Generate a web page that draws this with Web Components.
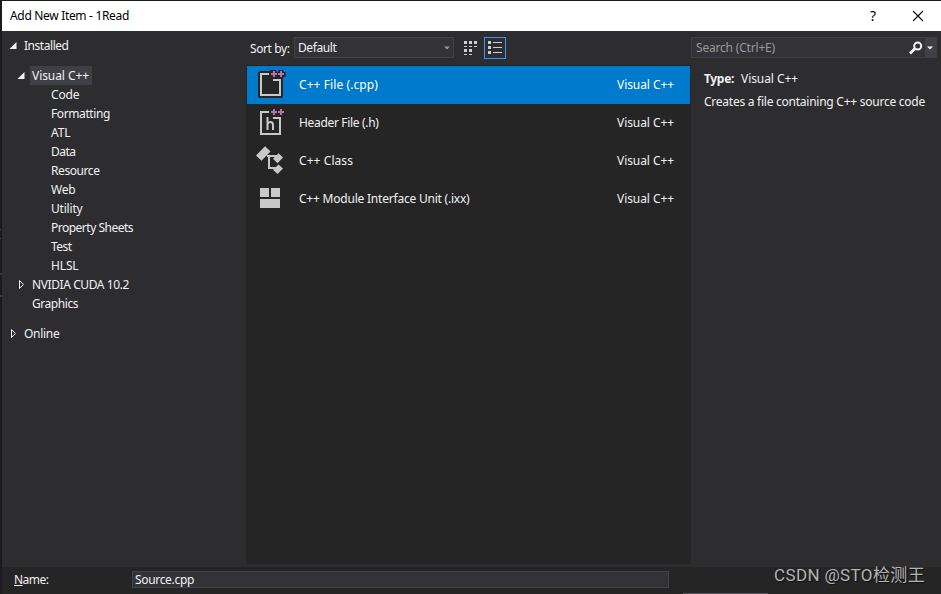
<!DOCTYPE html>
<html lang="en">
<head>
<meta charset="utf-8">
<title>Add New Item</title>
<style>
  html, body { margin: 0; height: 100%; overflow: hidden; }
  body {
    background: #1b1b1c;
    color: #f1f1f1;
    font: 12px/18px "Noto Sans", "Open Sans", "Noto Sans CJK SC", sans-serif;
  }
</style>
</head>
<body>
<item-dialog></item-dialog>

<script>
// Base class: puts the markup in an open shadow root
class UiElement extends HTMLElement {
  constructor () {
    super()
    this.shadowDOM = this.attachShadow({ mode: 'open' })
  }

  connectedCallback () {
    this.render()
  }
}

// A single line of text, tracked so that it fills the given width
class UiLabel extends UiElement {
  render () {
    this.shadowDOM.innerHTML = `
    <style>
    :host { display: block; white-space: nowrap; }
    span { display: block; width: max-content; }
    </style>
    <span><slot></slot></span>
    `
    const width = Number(this.getAttribute('width'))
    const span = this.shadowDOM.querySelector('span')
    const natural = span.getBoundingClientRect().width
    const spacing = (width - natural) / this.textContent.length
    span.style.letterSpacing = spacing.toFixed(3) + 'px'
  }
}

class TitleBar extends UiElement {
  render () {
    this.shadowDOM.innerHTML = `
    <style>
    :host {
      display: flex;
      align-items: center;
      height: 30px;
      padding: 0 17px 0 8px;
      background: #fff;
      color: #000;
    }
    .caption { flex: 1; }
    .help { margin-right: 35px; font-size: 14px; }
    svg { display: block; margin-bottom: 1px; }
    </style>
    <div class="caption"><slot></slot></div>
    <ui-label class="help" width="7">?</ui-label>
    <svg width="12" height="12" viewBox="0 0 12 12"><path d="M1 1L11 11M11 1L1 11" stroke="#000" stroke-width="1.1" fill="none"/></svg>
    `
  }
}

class TreeRow extends UiElement {
  render () {
    const state = this.getAttribute('state')
    const arrows = {
      open: '<path d="M7.5 1V8H0.5Z" fill="#f1f1f1"/>',
      closed: '<path d="M2.5 .5V8.5L6.5 4.5Z" fill="none" stroke="#f1f1f1"/>'
    }
    this.shadowDOM.innerHTML = `
    <style>
    :host {
      display: flex;
      align-items: center;
      height: 19px;
      padding-left: calc(var(--indent, 0) * 1px);
    }
    svg { width: 9px; height: 9px; margin-right: 4px; }
    .text { padding: 0 2px; height: 19px; line-height: 19px; }
    :host([selected]) .text { background: #3f3f46; padding-right: 3px; }
    </style>
    <svg viewBox="0 0 9 9">${arrows[state] || ''}</svg>
    <div class="text"><slot></slot></div>
    `
  }
}

class TemplateTree extends UiElement {
  render () {
    const row = (text, width, indent, state = '', extra = '') =>
      `<tree-row style="--indent:${indent}" state="${state}" ${extra}><ui-label width="${width}">${text}</ui-label></tree-row>`
    const leaves = [
      ['Code', 28.5], ['Formatting', 59], ['ATL', 19.5], ['Data', 24.5], ['Resource', 48.5],
      ['Web', 24.5], ['Utility', 31.5], ['Property Sheets', 82], ['Test', 20.5], ['HLSL', 27.5]
    ]
    this.shadowDOM.innerHTML = `
    <style>
    :host { display: block; padding-top: 5px; }
    .group { padding: 11px 0; }
    </style>
    ${row('Installed', 44.5, 7, 'open')}
    <div class="group">
      ${row('Visual C++', 57, 15, 'open', 'selected')}
      ${leaves.map(([text, width]) => row(text, width, 34)).join('')}
      ${row('NVIDIA CUDA 10.2', 97, 15, 'closed')}
      ${row('Graphics', 46, 15)}
    </div>
    ${row('Online', 35.5, 7, 'closed')}
    `
  }
}

class SortBar extends UiElement {
  render () {
    this.shadowDOM.innerHTML = `
    <style>
    :host {
      box-sizing: border-box;
      display: flex;
      align-items: flex-start;
      height: 34px;
      padding: 6px 0 0 4px;
    }
    .by { width: 44px; padding-top: 3px; }
    .combo {
      box-sizing: border-box;
      display: flex;
      align-items: center;
      justify-content: space-between;
      width: 160px;
      height: 21px;
      padding: 0 3px;
      border: 1px solid #434346;
      background: #333337;
    }
    .grid { margin: 4px 6px 0 10px; }
    .list {
      box-sizing: border-box;
      width: 22px;
      height: 22px;
      border: 1px solid #3399ff;
    }
    svg { display: block; }
    </style>
    <div class="by"><ui-label width="39.5">Sort by:</ui-label></div>
    <div class="combo">
      <ui-label width="38.5">Default</ui-label>
      <svg width="6" height="4"><path d="M0 .5H6L3 3.5Z" fill="#999"/></svg>
    </div>
    <svg class="grid" width="14" height="15" fill="#d0d0d0">
      <path d="M0 0h3v3H0zM5 0h3v3H5zM10 0h3v3h-3zM0 8h3v3H0zM5 8h3v3H5z"/>
      <path d="M0 5h3v1H0zM5 5h3v1H5zM10 5h3v1h-3zM0 13h3v1H0zM5 13h3v1H5z"/>
    </svg>
    <div class="list">
      <svg width="20" height="20" fill="#d0d0d0">
        <path d="M3 3h3v3H3zM3 8h3v3H3zM3 13h3v3H3zM8 4h9v1H8zM8 9h9v1H8zM8 14h9v1H8z"/>
      </svg>
    </div>
    `
  }
}

// 32px icons of the item templates
const plusPlus = '<path d="M17 2h2v2h2v2h-2v2h-2V6h-2V4h2zM24 2h2v2h2v2h-2v2h-2V6h-2V4h2z" fill="#b96fb4"/>'
const icons = {
  cpp: `<path d="M5 2H14V1H20.500V3H22.500V1H27.500V3H29.500V8H27V27Q27 29 25 29H4Q2 29 2 27V4.500Q2 2.500 5 2Z" fill="#252526"/>
    <path d="M13 5H5V26H24V11H17" fill="none" stroke="#c8c8c8" stroke-width="2"/>${plusPlus}`,
  header: `<path d="M13 5H5V27H24V11H17" fill="none" stroke="#c8c8c8" stroke-width="2"/>
    <path d="M11.500 10V23M11.500 17Q12.500 15 14.500 15Q17 15 17 18V23" fill="none" stroke="#c8c8c8" stroke-width="2"/>${plusPlus}`,
  class: `<g fill="#c8c8c8">
    <path d="M0 10.500L9 1.300L14.500 6.500L5.500 15.800Z"/>
    <path d="M17 13.700L22.500 8.300L27 12.500L21.500 18.300Z"/>
    <path d="M17 24.700L22.500 19.500L27 23.500L21.500 29Z"/></g>
    <path d="M11 11H21M13 11V23H20" fill="none" stroke="#c8c8c8" stroke-width="2"/>`,
  module: '<path d="M4 5h9v9H4zM15 5h9v9h-9zM4 16h20v9H4z" fill="#c8c8c8"/>'
}

class TemplateItem extends UiElement {
  render () {
    this.shadowDOM.innerHTML = `
    <style>
    :host {
      display: flex;
      align-items: center;
      height: 38px;
      padding: 0 16px 0 9px;
    }
    :host([selected]) { background: #007acc; color: #fff; }
    svg { width: 32px; height: 32px; margin-right: 11px; }
    .name { flex: 1; }
    </style>
    <svg viewBox="0 0 32 32">${icons[this.getAttribute('icon')]}</svg>
    <div class="name"><slot></slot></div>
    <ui-label width="57">Visual C++</ui-label>
    `
  }
}

class SearchBox extends UiElement {
  render () {
    this.shadowDOM.innerHTML = `
    <style>
    :host {
      box-sizing: border-box;
      display: flex;
      align-items: center;
      width: 246px;
      height: 21px;
      padding-left: 4px;
      border: 1px solid #3f3f46;
      background: #333337;
      color: #999;
    }
    .hint { flex: 1; }
    .drop {
      display: flex;
      align-items: center;
      justify-content: center;
      width: 11px;
      height: 19px;
      margin-left: 2px;
      padding-right: 1px;
      box-sizing: border-box;
      background: #3f3f46;
    }
    </style>
    <div class="hint"><slot></slot></div>
    <svg width="14" height="14"><circle cx="8.700" cy="5" r="3.500" fill="none" stroke="#f1f1f1" stroke-width="2"/><path d="M6 7.500L1 12.500" stroke="#f1f1f1" stroke-width="2.800"/></svg>
    <div class="drop"><svg width="6" height="4"><path d="M0 .5H6L3 3.500Z" fill="#f1f1f1"/></svg></div>
    `
  }
}

class NameBar extends UiElement {
  render () {
    this.shadowDOM.innerHTML = `
    <style>
    :host {
      display: flex;
      align-items: flex-start;
      height: 27px;
      padding-left: 12px;
      background: #252526;
    }
    .label { width: 118px; padding-top: 4px; }
    .input {
      box-sizing: border-box;
      width: 537px;
      height: 17px;
      margin-top: 4px;
      padding-left: 2px;
      border: 1px solid #434346;
      background: #333337;
      line-height: 16px;
    }
    .edge { align-self: flex-end; width: 85px; height: 1px; margin-left: 14px; background: #555558; }
    </style>
    <div class="label"><ui-label width="34.5">${'<u>N</u>ame:'}</ui-label></div>
    <div class="input"><ui-label width="59">Source.cpp</ui-label></div>
    <div class="edge"></div>
    `
  }
}

class WaterMark extends UiElement {
  render () {
    this.shadowDOM.innerHTML = `
    <style>
    :host {
      position: absolute;
      left: 774px;
      top: 563px;
      color: #b4b4b4;
      font: 17px/24px Roboto, "Noto Sans CJK SC", sans-serif;
      text-shadow: 1px 1px 1px #111;
    }
    </style>
    <slot></slot>
    `
  }
}

class ItemDialog extends UiElement {
  render () {
    // The background shows the editor behind the left edge of the dialog
    this.shadowDOM.innerHTML = `
    <style>
    :host {
      box-sizing: border-box;
      display: grid;
      grid-template-rows: 30px 536px 27px;
      height: 594px;
      padding: 1px 0 0 2px;
      background:
        linear-gradient(#8a2a1c, #8a2a1c) 0 229px / 1px 1px no-repeat,
        linear-gradient(#8a2a1c, #8a2a1c) 0 238px / 1px 1px no-repeat,
        linear-gradient(#3a3a3d, #3a3a3d) 0 273px / 2px 2px no-repeat,
        linear-gradient(#3a3a3d, #3a3a3d) 0 295px / 2px 2px no-repeat,
        #1b1b1c;
    }
    .body {
      display: grid;
      grid-template-columns: 244px 445px 1fr;
      background: #2d2d30;
    }
    .items {
      box-sizing: border-box;
      height: 499px;
      padding: 1px;
      background: #252526;
    }
    .details { padding-top: 6px; }
    .info { padding: 12px 0 0 13px; }
    .type { display: flex; gap: 7px; margin-bottom: 5px; }
    b { font-weight: 700; }
    </style>
    <title-bar><ui-label width="119">Add New Item - 1Read</ui-label></title-bar>
    <div class="body">
      <template-tree></template-tree>
      <div>
        <sort-bar></sort-bar>
        <div class="items">
          <template-item icon="cpp" selected><ui-label width="79">C++ File (.cpp)</ui-label></template-item>
          <template-item icon="header"><ui-label width="79.5">Header File (.h)</ui-label></template-item>
          <template-item icon="class"><ui-label width="54">C++ Class</ui-label></template-item>
          <template-item icon="module"><ui-label width="170.500">C++ Module Interface Unit (.ixx)</ui-label></template-item>
        </div>
      </div>
      <div class="details">
        <search-box><ui-label width="79">Search (Ctrl+E)</ui-label></search-box>
        <div class="info">
          <div class="type"><ui-label width="30"><b>Type:</b></ui-label><ui-label width="57">Visual C++</ui-label></div>
          <ui-label width="221">Creates a file containing C++ source code</ui-label>
        </div>
      </div>
    </div>
    <name-bar></name-bar>
    <water-mark><ui-label width="151">CSDN @STO检测王</ui-label></water-mark>
    `
  }
}

customElements.define('ui-label', UiLabel)
customElements.define('title-bar', TitleBar)
customElements.define('tree-row', TreeRow)
customElements.define('template-tree', TemplateTree)
customElements.define('sort-bar', SortBar)
customElements.define('template-item', TemplateItem)
customElements.define('search-box', SearchBox)
customElements.define('name-bar', NameBar)
customElements.define('water-mark', WaterMark)
customElements.define('item-dialog', ItemDialog)
</script>
</body>
</html>
